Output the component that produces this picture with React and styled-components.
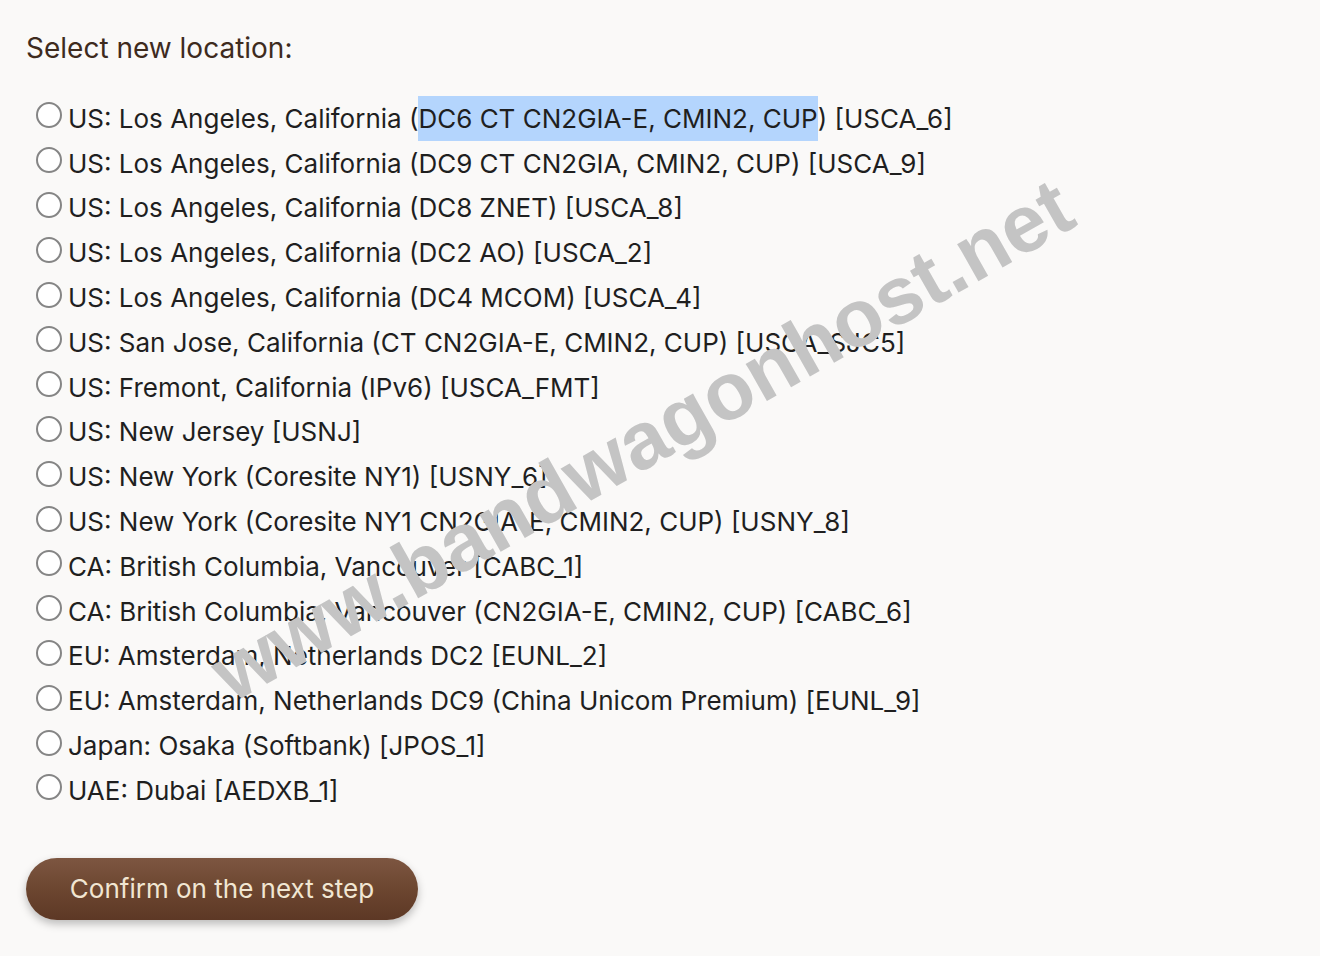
import React from 'react'
import styled, { createGlobalStyle } from 'styled-components'

const Global = createGlobalStyle`
  html, body {
    margin: 0;
    padding: 0;
    background: #faf9f8;
  }
  body {
    font-family: Inter, 'Noto Sans', sans-serif;
  }
`

const Page = styled.div`
  position: relative;
  width: 1320px;
  height: 956px;
  overflow: hidden;
  padding: 28px 26px 0;
  box-sizing: border-box;
`

const Titulo = styled.h2`
  margin: 0 0 28px;
  font-size: 28px;
  font-weight: 400;
  line-height: 40px;
  color: #3e2b1e;
`

const Lista = styled.div`
  display: flex;
  flex-direction: column;
  padding-left: 10px;
`

const Opcao = styled.label`
  display: flex;
  align-items: center;
  height: 44.8px;
  font-size: 26px;
  color: #1f1f1f;
  white-space: nowrap;
`

const Radio = styled.input`
  appearance: none;
  margin: -6px 6px 0 0;
  width: 26px;
  height: 26px;
  border: 2px solid #858585;
  border-radius: 50%;
  background: #fff;
  box-sizing: border-box;
  flex-shrink: 0;
`

const Selecao = styled.span`
  background: #b4d5fd;
  padding: 7px 0;
`

const Botao = styled.button`
  margin-top: 45px;
  width: 392px;
  height: 62px;
  border: none;
  border-radius: 31px;
  background: linear-gradient(180deg, #7d5641 0%, #6c4630 50%, #5d3825 100%);
  box-shadow: 0 4px 8px rgba(0, 0, 0, 0.25);
  color: #f1e6d2;
  font-family: inherit;
  font-size: 26px;
  cursor: pointer;
`

const MarcaDagua = styled.div`
  position: absolute;
  left: 642px;
  top: 440px;
  transform: translate(-50%, -50%) rotate(-29.5deg);
  font-family: 'Liberation Sans', Arial, sans-serif;
  font-weight: 700;
  font-size: 81px;
  line-height: 1;
  color: #c4c4c4;
  white-space: nowrap;
  pointer-events: none;
`

const locais = [
  ['US: Los Angeles, California (', 'DC6 CT CN2GIA-E, CMIN2, CUP', ') [USCA_6]'],
  ['US: Los Angeles, California (DC9 CT CN2GIA, CMIN2, CUP) [USCA_9]'],
  ['US: Los Angeles, California (DC8 ZNET) [USCA_8]'],
  ['US: Los Angeles, California (DC2 AO) [USCA_2]'],
  ['US: Los Angeles, California (DC4 MCOM) [USCA_4]'],
  ['US: San Jose, California (CT CN2GIA-E, CMIN2, CUP) [USCA_SJC5]'],
  ['US: Fremont, California (IPv6) [USCA_FMT]'],
  ['US: New Jersey [USNJ]'],
  ['US: New York (Coresite NY1) [USNY_6]'],
  ['US: New York (Coresite NY1 CN2GIA-E, CMIN2, CUP) [USNY_8]'],
  ['CA: British Columbia, Vancouver [CABC_1]'],
  ['CA: British Columbia, Vancouver (CN2GIA-E, CMIN2, CUP) [CABC_6]'],
  ['EU: Amsterdam, Netherlands DC2 [EUNL_2]'],
  ['EU: Amsterdam, Netherlands DC9 (China Unicom Premium) [EUNL_9]'],
  ['Japan: Osaka (Softbank) [JPOS_1]'],
  ['UAE: Dubai [AEDXB_1]'],
]

export default function App() {
  return (
    <>
      <Global />
      <Page>
        <Titulo>Select new location:</Titulo>
        <Lista>
          {locais.map((partes, i) => (
            <Opcao key={i}>
              <Radio type="radio" name="local" />
              {partes.length === 3 ? (
                <span>
                  {partes[0]}
                  <Selecao>{partes[1]}</Selecao>
                  {partes[2]}
                </span>
              ) : (
                <span>{partes[0]}</span>
              )}
            </Opcao>
          ))}
        </Lista>
        <Botao>Confirm on the next step</Botao>
        <MarcaDagua>www.bandwagonhost.net</MarcaDagua>
      </Page>
    </>
  )
}
